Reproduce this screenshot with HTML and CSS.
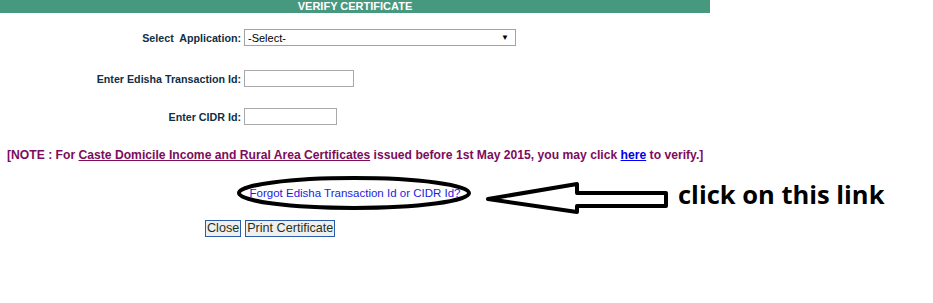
FILE: index.html
```html
<!DOCTYPE html>
<html>
	<head>
		<meta charset="UTF-8">
		<title>Verify Certificate</title>
		<link rel="stylesheet" href="styles.css">
	</head>
	<body>
		<div class="page">
			<div class="head">VERIFY CERTIFICATE</div>
			<div class="form">
				<label class="lbl row1">Select&nbsp; Application:</label>
				<div class="fld row1">
					<div class="sel"><span>-Select-</span><span class="arr">&#9660;</span></div>
				</div>
				<label class="lbl row2">Enter Edisha Transaction Id:</label>
				<div class="fld row2"><input type="text" class="txt t1"></div>
				<label class="lbl row3">Enter CIDR Id:</label>
				<div class="fld row3"><input type="text" class="txt t2"></div>
			</div>
			<p class="note">[NOTE : For <a href="javascript:;" class="cert">Caste Domicile Income and Rural Area Certificates</a> issued before 1st May 2015, you may click <a href="javascript:;" class="here">here</a> to verify.]</p>
			<div class="forgot"><a href="javascript:;">Forgot Edisha Transaction Id or CIDR Id?</a></div>
			<div class="btns">
				<button class="btn">Close</button>
				<button class="btn">Print Certificate</button>
			</div>

			<!-- annotation drawn over the page -->
			<svg class="mark" width="933" height="303" viewBox="0 0 933 303">
				<ellipse cx="354" cy="193" rx="115" ry="15" fill="none" stroke="#000" stroke-width="4"/>
				<polygon points="488,199 577,184 577,193 666,193 666,206 577,206 577,212" fill="#fff" stroke="#000" stroke-width="4" stroke-linejoin="round"/>
			</svg>
			<div class="hint">click on this link</div>
		</div>
	</body>
</html>
```

FILE: styles.css
```css
*{ margin: 0; padding: 0;}
body{ background: #fff; font-family: Arial, "Liberation Sans", sans-serif; color: #0f2f44;}
.page{ width: 710px; position: relative; height: 303px;}
.head{ height: 13px; line-height: 13px; background: #46997f; color: #fff; font-size: 11px; font-weight: bold; text-align: center;}

.form{ display: grid; grid-template-columns: 241px 1fr; column-gap: 3px; row-gap: 24px; margin-top: 16px; align-items: center;}
.lbl{ text-align: right; font-size: 10.7px; font-weight: bold;}
.sel{ border: 1px solid #a3a3a3; display: flex; justify-content: space-between; align-items: center; font-size: 11px; color: #000; padding: 0 6px 0 3px; box-sizing: border-box; width: 272px; height: 17px;}
.sel .arr{ font-size: 8px;}
.txt{ height: 17px; border: 1px solid #a9a9a9; box-sizing: border-box; display: block;}
.t1{ width: 110px;}
.t2{ width: 93px;}
.form .row3{ margin-top: -3px;}

.note{ margin: 23px 0 0 7px; font-size: 12.15px; font-weight: bold; color: #7d0c5c; white-space: nowrap;}
.note .cert{ color: #7d0c5c;}
.note .here{ color: #0000ee;}

.forgot{ text-align: center; margin-top: 25px; font-size: 11.5px;}
.forgot a{ color: #1c1ce0; text-decoration: none;}

.btns{ margin: 21px 0 0 205px; display: flex; gap: 4px;}
.btn{ font-family: Arial, "Liberation Sans", sans-serif; font-size: 12.6px; color: #1d3320; background: #efefef; border: 1px solid #2a5ca8; height: 17px; padding: 0 1px; line-height: 15px;}

.mark{ position: absolute; left: 0; top: 0; pointer-events: none;}
.hint{ position: absolute; left: 678px; top: 177px; font-family: "Open Sans", "Noto Sans", sans-serif; font-weight: bold; font-size: 25.5px; color: #000; white-space: nowrap;}
```
